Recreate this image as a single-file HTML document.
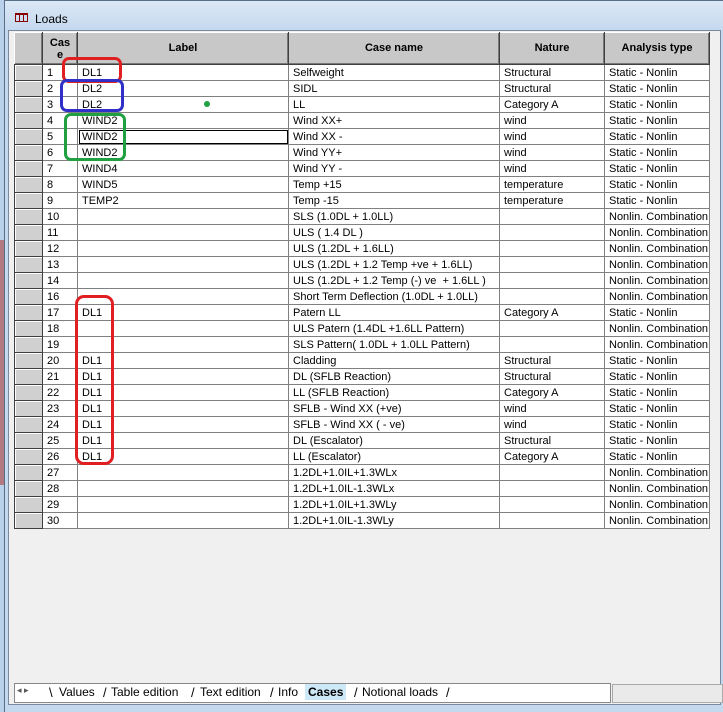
<!DOCTYPE html>
<html><head><style>
body{margin:0;width:723px;height:711px;overflow:hidden;background:#b9d1ea;font-family:"Liberation Sans",Arial,sans-serif;position:relative}
#outside{position:absolute;left:0;top:240px;width:5px;height:245px;background:#b07a80}
#win{position:absolute;left:4px;top:0;width:719px;height:711px;background:linear-gradient(#dbe8f6,#c4d8ee 30px);border-left:1px solid #5a6f87;border-top:1px solid #5a6f87}
#title{position:absolute;left:30px;top:11px;font-size:12px;color:#000}
#icon{position:absolute;left:10px;top:12px;width:13px;height:9px;border:1px solid #800;border-top:2px solid #800;box-sizing:border-box}
#icon:before{content:"";position:absolute;left:3px;top:0;width:3px;height:7px;border-left:1px solid #800;border-right:1px solid #800}
#client{position:absolute;left:8px;top:30px;width:711px;height:673px;background:#f0f0f0;border:1px solid #7a8a9c}
table{position:absolute;left:14px;top:32px;border-collapse:collapse;font-size:11px;table-layout:fixed}
td,th{border:1px solid #808080;height:13px;padding:2px 0 0 4px;white-space:nowrap;overflow:hidden;background:#fff;line-height:13px}
th{background:#c8c8c8;font-weight:bold;height:31px;text-align:center;padding:0;border:1px solid #404040;border-top:1px solid #fff;border-left:1px solid #fff;box-shadow:inset -1px -1px 0 #777}
td.h{background:#d0d0d0;border:1px solid #404040;padding:0;height:15px;box-shadow:inset 1px 1px 0 #fff}
.sel{outline:1px solid #000;outline-offset:-2px}
.an{position:absolute;border-radius:7px;border:3px solid}
#tabs{position:absolute;left:14px;top:683px;width:595px;height:18px;background:#fff;border:1px solid #888;font-size:12px}
.tab{position:absolute;top:1px}
.sl{position:absolute;top:1px;color:#000;font-size:13px}
#hs{position:absolute;left:612px;top:684px;width:109px;height:17px;background:#eaeaea;border:1px solid #aaa}
</style></head><body>
<div id="outside"></div>
<div id="win"><div id="icon"></div><div id="title">Loads</div></div>
<div id="client"></div>
<table>
<colgroup><col style="width:28px"><col style="width:35px"><col style="width:211px"><col style="width:211px"><col style="width:105px"><col style="width:105px"></colgroup>
<tr><th></th><th style="line-height:12px">Cas<br>e</th><th>Label</th><th>Case name</th><th>Nature</th><th>Analysis type</th></tr>
<tr><td class="h"></td><td>1</td><td>DL1</td><td>Selfweight</td><td>Structural</td><td>Static - Nonlin</td></tr>
<tr><td class="h"></td><td>2</td><td>DL2</td><td>SIDL</td><td>Structural</td><td>Static - Nonlin</td></tr>
<tr><td class="h"></td><td>3</td><td>DL2</td><td>LL</td><td>Category A</td><td>Static - Nonlin</td></tr>
<tr><td class="h"></td><td>4</td><td>WIND2</td><td>Wind XX+</td><td>wind</td><td>Static - Nonlin</td></tr>
<tr><td class="h"></td><td>5</td><td class="sel">WIND2</td><td>Wind XX -</td><td>wind</td><td>Static - Nonlin</td></tr>
<tr><td class="h"></td><td>6</td><td>WIND2</td><td>Wind YY+</td><td>wind</td><td>Static - Nonlin</td></tr>
<tr><td class="h"></td><td>7</td><td>WIND4</td><td>Wind YY -</td><td>wind</td><td>Static - Nonlin</td></tr>
<tr><td class="h"></td><td>8</td><td>WIND5</td><td>Temp +15</td><td>temperature</td><td>Static - Nonlin</td></tr>
<tr><td class="h"></td><td>9</td><td>TEMP2</td><td>Temp -15</td><td>temperature</td><td>Static - Nonlin</td></tr>
<tr><td class="h"></td><td>10</td><td></td><td>SLS (1.0DL + 1.0LL)</td><td></td><td>Nonlin. Combination</td></tr>
<tr><td class="h"></td><td>11</td><td></td><td>ULS ( 1.4 DL )</td><td></td><td>Nonlin. Combination</td></tr>
<tr><td class="h"></td><td>12</td><td></td><td>ULS (1.2DL + 1.6LL)</td><td></td><td>Nonlin. Combination</td></tr>
<tr><td class="h"></td><td>13</td><td></td><td>ULS (1.2DL + 1.2 Temp +ve + 1.6LL)</td><td></td><td>Nonlin. Combination</td></tr>
<tr><td class="h"></td><td>14</td><td></td><td>ULS (1.2DL + 1.2 Temp (-) ve&nbsp; + 1.6LL )</td><td></td><td>Nonlin. Combination</td></tr>
<tr><td class="h"></td><td>16</td><td></td><td>Short Term Deflection (1.0DL + 1.0LL)</td><td></td><td>Nonlin. Combination</td></tr>
<tr><td class="h"></td><td>17</td><td>DL1</td><td>Patern LL</td><td>Category A</td><td>Static - Nonlin</td></tr>
<tr><td class="h"></td><td>18</td><td></td><td>ULS Patern (1.4DL +1.6LL Pattern)</td><td></td><td>Nonlin. Combination</td></tr>
<tr><td class="h"></td><td>19</td><td></td><td>SLS Pattern( 1.0DL + 1.0LL Pattern)</td><td></td><td>Nonlin. Combination</td></tr>
<tr><td class="h"></td><td>20</td><td>DL1</td><td>Cladding</td><td>Structural</td><td>Static - Nonlin</td></tr>
<tr><td class="h"></td><td>21</td><td>DL1</td><td>DL (SFLB Reaction)</td><td>Structural</td><td>Static - Nonlin</td></tr>
<tr><td class="h"></td><td>22</td><td>DL1</td><td>LL (SFLB Reaction)</td><td>Category A</td><td>Static - Nonlin</td></tr>
<tr><td class="h"></td><td>23</td><td>DL1</td><td>SFLB - Wind XX (+ve)</td><td>wind</td><td>Static - Nonlin</td></tr>
<tr><td class="h"></td><td>24</td><td>DL1</td><td>SFLB - Wind XX ( - ve)</td><td>wind</td><td>Static - Nonlin</td></tr>
<tr><td class="h"></td><td>25</td><td>DL1</td><td>DL (Escalator)</td><td>Structural</td><td>Static - Nonlin</td></tr>
<tr><td class="h"></td><td>26</td><td>DL1</td><td>LL (Escalator)</td><td>Category A</td><td>Static - Nonlin</td></tr>
<tr><td class="h"></td><td>27</td><td></td><td>1.2DL+1.0IL+1.3WLx</td><td></td><td>Nonlin. Combination</td></tr>
<tr><td class="h"></td><td>28</td><td></td><td>1.2DL+1.0IL-1.3WLx</td><td></td><td>Nonlin. Combination</td></tr>
<tr><td class="h"></td><td>29</td><td></td><td>1.2DL+1.0IL+1.3WLy</td><td></td><td>Nonlin. Combination</td></tr>
<tr><td class="h"></td><td>30</td><td></td><td>1.2DL+1.0IL-1.3WLy</td><td></td><td>Nonlin. Combination</td></tr>
</table>
<div class="an" style="left:62px;top:57px;width:54px;height:20px;border-color:#e02020"></div>
<div class="an" style="left:60px;top:79px;width:58px;height:27px;border-color:#3030c8"></div>
<div class="an" style="left:64px;top:113px;width:56px;height:42px;border-color:#20a040"></div>
<div class="an" style="left:75px;top:295px;width:33px;height:164px;border-color:#e02020;border-radius:9px"></div>
<div style="position:absolute;left:204px;top:101px;width:6px;height:6px;border-radius:50%;background:#20a040"></div>
<div id="tabs">
<span class="tab" style="left:2px;font-size:9px;color:#555">◂ ▸</span>
<span class="sl" style="left:34px">\</span>
<span class="tab" style="left:44px">Values</span>
<span class="sl" style="left:88px">/</span>
<span class="tab" style="left:96px">Table edition</span>
<span class="sl" style="left:176px">/</span>
<span class="tab" style="left:185px">Text edition</span>
<span class="sl" style="left:255px">/</span>
<span class="tab" style="left:263px">Info</span>
<span class="tab" style="left:290px;top:0;background:#cde8f6;font-weight:bold;padding:1px 3px">Cases</span>
<span class="sl" style="left:339px">/</span>
<span class="tab" style="left:347px">Notional loads</span>
<span class="sl" style="left:431px">/</span>
</div>
<div id="hs"></div>
</body></html>
